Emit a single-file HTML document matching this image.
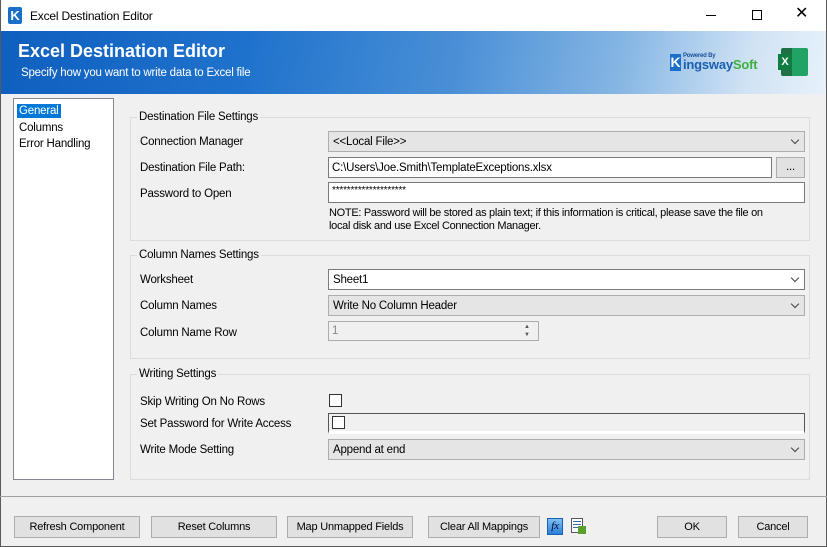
<!DOCTYPE html>
<html><head><meta charset="utf-8"><style>
*{box-sizing:border-box;margin:0;padding:0}
body{width:827px;height:547px;overflow:hidden;background:#f0f0f0;font-family:"Liberation Sans",Arial,sans-serif;font-size:11.5px;line-height:14px;letter-spacing:-0.2px;color:#000;position:relative}
.a{position:absolute;white-space:nowrap}
.win{position:absolute;left:0;top:0;width:827px;height:547px;border:1px solid #5a5a5a;border-top:none}
.grp{position:absolute;border:1px solid #dcdcdc}
.gl{position:absolute;top:-8px;left:6px;background:#f0f0f0;padding:0 2px}
.lbl{position:absolute;left:140px}
.cmb{position:absolute;left:328px;width:477px;height:21px;border:1px solid #adadad;background:#e5e5e5;padding:3px 4px}
.cmb.w{background:#fff;border-color:#7a7a7a}
.cmb:after{content:"";position:absolute;right:6px;top:5px;width:5px;height:5px;border-right:1px solid #444;border-bottom:1px solid #444;transform:rotate(45deg)}
.tb{position:absolute;background:#fff;border:1px solid #7a7a7a;height:21px;padding:3px 3px}
.btn{position:absolute;top:516px;height:22px;background:#e1e1e1;border:1px solid #adadad;text-align:center;line-height:20px;font-size:11px}
.chk{position:absolute;width:13px;height:13px;border:1px solid #333;background:#fff}
</style></head><body>
<div class="a" style="left:0;top:0;width:827px;height:31px;background:#fff"></div>
<div class="a" style="left:8px;top:7px;width:14px;height:17px;background:#1a6fc9;border-radius:2px;color:#fff;font-weight:bold;font-size:13px;text-align:center;line-height:17px">K</div>
<div class="a" style="left:30px;top:9px;font-size:12px">Excel Destination Editor</div>
<div class="a" style="left:706px;top:15px;width:10px;height:1px;background:#000"></div>
<div class="a" style="left:752px;top:10px;width:10px;height:10px;border:1px solid #000"></div>
<div class="a" style="left:795px;top:4px;font-size:16px;line-height:20px;font-weight:300">✕</div>
<div class="a" style="left:0;top:31px;width:827px;height:63px;background:linear-gradient(100deg,#0f5fbf 0%,#1f72cc 30%,#4a8fd6 55%,#86b6e3 75%,#d0e2f4 90%,#e8f1fa 100%)"></div>
<div class="a" style="left:18px;top:41px;color:#fff;font-weight:bold;font-size:18px;line-height:21px;letter-spacing:0">Excel Destination Editor</div>
<div class="a" style="left:21px;top:66px;color:#fff;font-size:11.5px">Specify how you want to write data to Excel file</div>
<div class="a" style="left:670px;top:54px;width:11px;height:17px;background:#1a6fc9;color:#fff;font-weight:bold;font-size:14px;line-height:17px;text-align:center">K</div>
<div class="a" style="left:683px;top:52px;font-size:6px;line-height:8px;font-weight:bold;color:#1a4f99">Powered By</div>
<div class="a" style="left:683px;top:57px;font-size:13px;line-height:16px;font-weight:bold;color:#1a5fb0">ingsway<span style="color:#3eb03e">Soft</span></div>
<div class="a" style="left:781px;top:48px;width:27px;height:28px;background:linear-gradient(90deg,#1e7145 0 40%,#21a366 40%);border-radius:2px"></div>
<div class="a" style="left:778px;top:54px;width:14px;height:16px;background:#107c41;color:#fff;font-weight:bold;text-align:center;line-height:16px;font-size:11px">X</div>
<div class="win"></div>
<div class="a" style="left:13px;top:98px;width:101px;height:382px;background:#fff;border:1px solid #828790"></div>
<div class="a" style="left:17px;top:104px;background:#0078d7;color:#fff;padding:0 2px;height:14px;line-height:14px">General</div>
<div class="a" style="left:19px;top:121px">Columns</div>
<div class="a" style="left:19px;top:137px">Error Handling</div>

<div class="grp" style="left:130px;top:117px;width:680px;height:124px"><div class="gl">Destination File Settings</div></div>
<div class="lbl a" style="top:135px">Connection Manager</div>
<div class="cmb" style="top:131px">&lt;&lt;Local File&gt;&gt;</div>
<div class="lbl a" style="top:161px">Destination File Path:</div>
<div class="tb" style="left:328px;top:157px;width:444px">C:\Users\Joe.Smith\TemplateExceptions.xlsx</div>
<div class="a" style="left:776px;top:157px;width:29px;height:21px;background:#e1e1e1;border:1px solid #adadad;text-align:center;line-height:18px">...</div>
<div class="lbl a" style="top:187px">Password to Open</div>
<div class="tb" style="left:328px;top:182px;width:477px;font-size:10px;line-height:10px">********************</div>
<div class="a" style="left:329px;top:207px;line-height:13px;font-size:11px;letter-spacing:-0.3px">NOTE: Password will be stored as plain text; if this information is critical, please save the file on<br>local disk and use Excel Connection Manager.</div>

<div class="grp" style="left:130px;top:255px;width:680px;height:104px"><div class="gl">Column Names Settings</div></div>
<div class="lbl a" style="top:273px">Worksheet</div>
<div class="cmb w" style="top:269px">Sheet1</div>
<div class="lbl a" style="top:299px">Column Names</div>
<div class="cmb" style="top:295px">Write No Column Header</div>
<div class="lbl a" style="top:326px">Column Name Row</div>
<div class="a" style="left:328px;top:321px;width:211px;height:20px;border:1px solid #adadad;background:#f0f0f0;color:#888;padding:2px 3px">1</div>
<div class="a" style="left:524px;top:323px;font-size:6px;color:#555;line-height:8px">▲<br>▼</div>

<div class="grp" style="left:130px;top:374px;width:680px;height:106px"><div class="gl">Writing Settings</div></div>
<div class="lbl a" style="top:395px">Skip Writing On No Rows</div>
<div class="chk" style="left:329px;top:394px"></div>
<div class="lbl a" style="top:417px">Set Password for Write Access</div>
<div class="a" style="left:328px;top:413px;width:477px;height:21px;border:1px solid #555;background:#f0f0f0;border-bottom:3px solid #fff"></div>
<div class="chk" style="left:332px;top:416px"></div>
<div class="lbl a" style="top:443px">Write Mode Setting</div>
<div class="cmb" style="top:439px">Append at end</div>

<div class="a" style="left:0;top:496px;width:827px;height:1px;background:#a0a0a0"></div>
<div class="btn" style="left:14px;width:126px">Refresh Component</div>
<div class="btn" style="left:151px;width:126px">Reset Columns</div>
<div class="btn" style="left:287px;width:126px">Map Unmapped Fields</div>
<div class="btn" style="left:428px;width:112px">Clear All Mappings</div>
<div class="a" style="left:547px;top:518px;width:16px;height:17px;background:linear-gradient(#7fc0f5,#2a7fd8);border:1px solid #1a5fb0;font-style:italic;font-family:'Liberation Serif',serif;font-size:11px;text-align:center;line-height:15px;color:#003">fx</div>
<div class="a" style="left:571px;top:518px;width:12px;height:15px;background:#fff;border:1px solid #556"></div>
<div class="a" style="left:573px;top:521px;width:8px;height:1px;background:#46a;box-shadow:0 3px 0 #46a,0 6px 0 #46a"></div>
<div class="a" style="left:578px;top:526px;width:8px;height:8px;background:#5aa02c"></div>
<div class="btn" style="left:657px;width:70px">OK</div>
<div class="btn" style="left:738px;width:70px">Cancel</div>
</body></html>
